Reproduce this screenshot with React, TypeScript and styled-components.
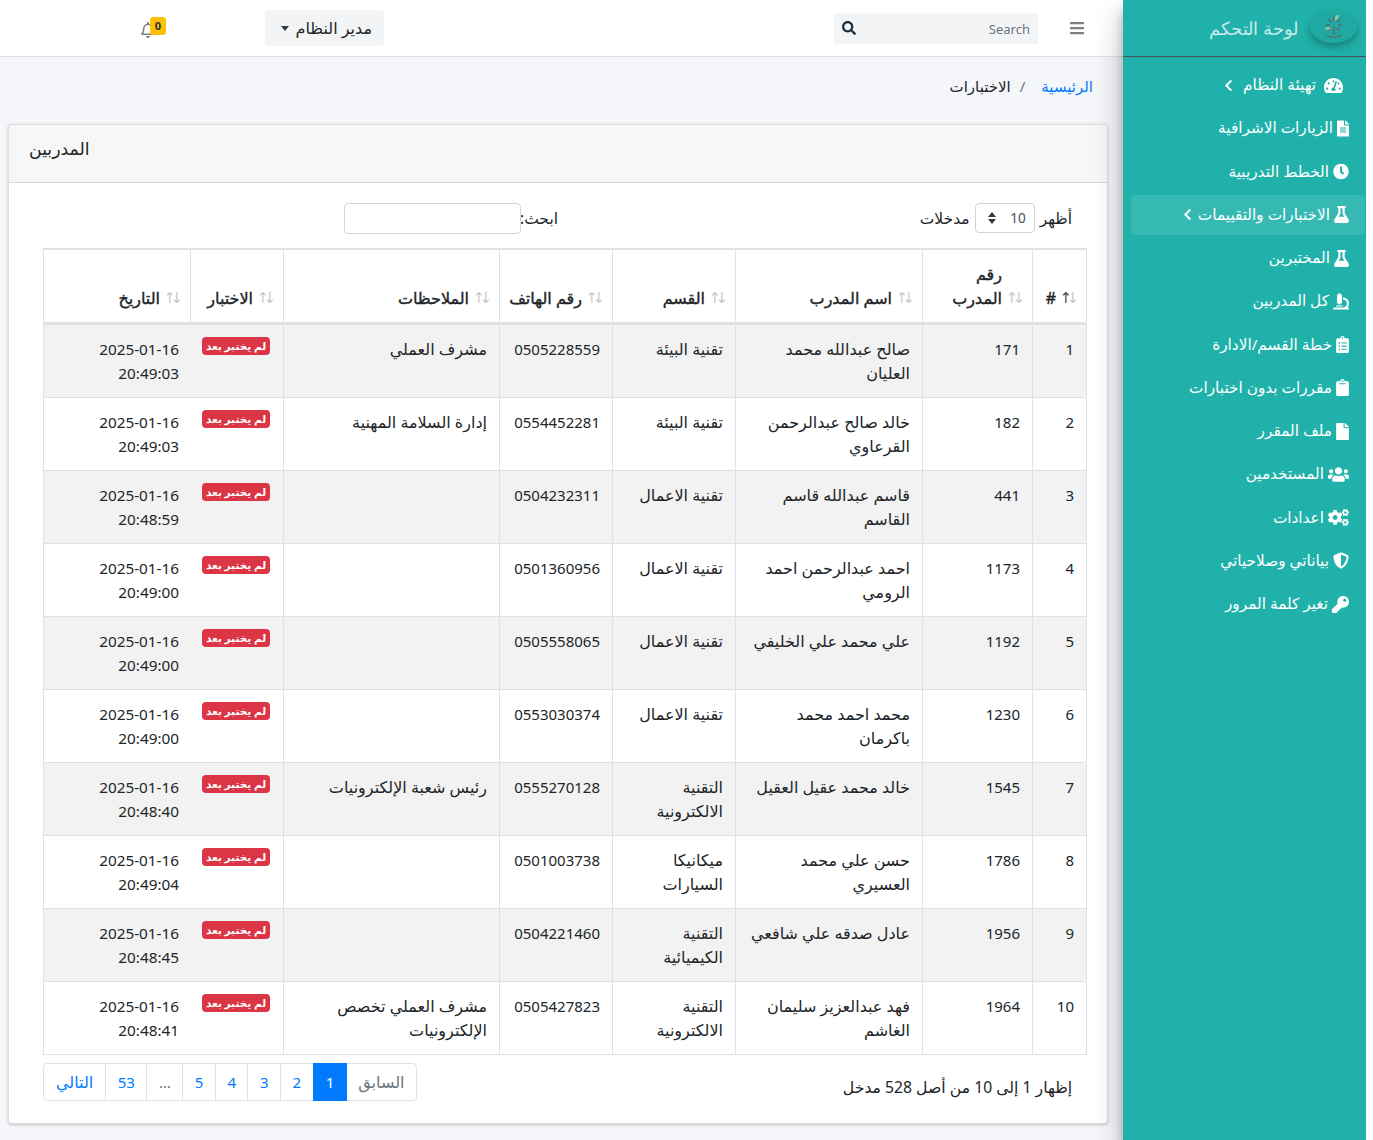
import React from "react";
import styled, { createGlobalStyle } from "styled-components";
import {
    FaBars,
    FaChevronLeft,
    FaClipboard,
    FaClipboardList,
    FaClock,
    FaCogs,
    FaFile,
    FaFileAlt,
    FaFlask,
    FaKey,
    FaMicroscope,
    FaRegBell,
    FaSearch,
    FaShieldAlt,
    FaTachometerAlt,
    FaUsers,
} from "react-icons/fa";

const GlobalStyle = createGlobalStyle`
    html, body {
        margin: 0;
        padding: 0;
        background: #fff;
    }
    body {
        font-family: "Noto Sans", "DejaVu Sans", sans-serif;
        font-size: 15px;
        line-height: 24px;
        color: #212529;
    }
    * {
        box-sizing: border-box;
    }
`;

const menu = [
    { icon: <FaTachometerAlt />, iconWidth: 19, label: "تهيئة النظام", arrow: true, inset: true },
    { icon: <FaFileAlt />, iconWidth: 12, label: "الزيارات الاشرافية" },
    { icon: <FaClock />, iconWidth: 16, label: "الخطط التدريبية" },
    { icon: <FaFlask />, iconWidth: 15, label: "الاختبارات والتقييمات", arrow: true, active: true },
    { icon: <FaFlask />, iconWidth: 15, label: "المختبرين" },
    { icon: <FaMicroscope />, iconWidth: 16, label: "كل المدربين" },
    { icon: <FaClipboardList />, iconWidth: 13, label: "خطة القسم/الادارة" },
    { icon: <FaClipboard />, iconWidth: 13, label: "مقررات بدون اختبارات" },
    { icon: <FaFile />, iconWidth: 13, label: "ملف المقرر" },
    { icon: <FaUsers />, iconWidth: 21, label: "المستخدمين" },
    { icon: <FaCogs />, iconWidth: 21, label: "اعدادات" },
    { icon: <FaShieldAlt />, iconWidth: 16, label: "بياناتي وصلاحياتي" },
    { icon: <FaKey />, iconWidth: 17, label: "تغير كلمة المرور" },
];

const columns = [
    { title: "#", width: 54, first: true },
    { title: "رقم المدرب", width: 110 },
    { title: "اسم المدرب", width: 187 },
    { title: "القسم", width: 123 },
    { title: "رقم الهاتف", width: 113 },
    { title: "الملاحظات", width: 216 },
    { title: "الاختبار", width: 93 },
    { title: "التاريخ", width: 147 },
];

const rows = [
    ["1", "171", "صالح عبدالله محمد العليان", "تقنية البيئة", "0505228559", "مشرف العملي", "2025-01-16 20:49:03"],
    ["2", "182", "خالد صالح عبدالرحمن القرعاوي", "تقنية البيئة", "0554452281", "إدارة السلامة المهنية", "2025-01-16 20:49:03"],
    ["3", "441", "قاسم عبدالله قاسم القاسم", "تقنية الاعمال", "0504232311", "", "2025-01-16 20:48:59"],
    ["4", "1173", "احمد عبدالرحمن احمد الرومي", "تقنية الاعمال", "0501360956", "", "2025-01-16 20:49:00"],
    ["5", "1192", "علي محمد علي الخليفي", "تقنية الاعمال", "0505558065", "", "2025-01-16 20:49:00"],
    ["6", "1230", "محمد احمد محمد باكرمان", "تقنية الاعمال", "0553030374", "", "2025-01-16 20:49:00"],
    ["7", "1545", "خالد محمد عقيل العقيل", "التقنية الالكترونية", "0555270128", "رئيس شعبة الإلكترونيات", "2025-01-16 20:48:40"],
    ["8", "1786", "حسن علي محمد العسيري", "ميكانيكا السيارات", "0501003738", "", "2025-01-16 20:49:04"],
    ["9", "1956", "عادل صدقه علي شافعي", "التقنية الكيميائية", "0504221460", "", "2025-01-16 20:48:45"],
    ["10", "1964", "فهد عبدالعزيز سليمان الغاشم", "التقنية الالكترونية", "0505427823", "مشرف العملي تخصص الإلكترونيات", "2025-01-16 20:48:41"],
];

const pages = ["1", "2", "3", "4", "5", "…", "53"];

function Logo() {
    const rays = [0, 45, 90, 135, 180, 225, 270, 315];
    return (
        <svg width="20" height="26" viewBox="0 0 20 26">
            {rays.map((r) => (
                <rect
                    key={r}
                    x="9.2"
                    y="3"
                    width="1.6"
                    height="4"
                    fill="#55706c"
                    transform={`rotate(${r} 10 11)`}
                />
            ))}
            <path d="M11 7c2-1 4-3 4-6-3 0-5 2-4 6z" fill="#8fd0a8" />
            <path d="M7 14c-2-1-5-1-6 1 2 1 5 1 6-1z" fill="#a9c9ab" />
            <path d="M10 12v9" stroke="#4f7a72" strokeWidth="1.6" />
            <path d="M3 21c3 3 11 3 14 0" stroke="#55706c" strokeWidth="1.2" fill="none" />
        </svg>
    );
}

export default function App() {
    return (
        <Page dir="rtl">
            <GlobalStyle />
            <Sidebar>
                <Brand>
                    <BrandLogo>
                        <Logo />
                    </BrandLogo>
                    <BrandText>لوحة التحكم</BrandText>
                </Brand>
                <Menu>
                    {menu.map((item) => (
                        <MenuItem
                            key={item.label}
                            $active={item.active}
                            $inset={item.inset}
                            $iconWidth={item.iconWidth}>
                            {item.icon}
                            <span>{item.label}</span>
                            {item.arrow && <MenuArrow />}
                        </MenuItem>
                    ))}
                </Menu>
            </Sidebar>

            <Main>
                <TopBar>
                    <BarsButton>
                        <FaBars />
                    </BarsButton>
                    <SearchBox>
                        <SearchInput placeholder="Search" />
                        <SearchButton>
                            <FaSearch />
                        </SearchButton>
                    </SearchBox>
                    <UserMenu>مدير النظام</UserMenu>
                    <Bell>
                        <FaRegBell />
                        <BellBadge>0</BellBadge>
                    </Bell>
                </TopBar>

                <Content>
                    <Breadcrumb>
                        <a href="#">الرئيسية</a>
                        <Slash>/</Slash>
                        <span>الاختبارات</span>
                    </Breadcrumb>

                    <Card>
                        <CardHeader>
                            <CardTitle>المدربين</CardTitle>
                        </CardHeader>
                        <CardBody>
                            <Controls>
                                <LengthBlock>
                                    <LabelText>أظهر</LabelText>
                                    <LengthSelect>
                                        <SelectArrows viewBox="0 0 8 12">
                                            <path d="M4 0l4 5H0zM4 12L0 7h8z" fill="#343a40" />
                                        </SelectArrows>
                                        10
                                    </LengthSelect>
                                    <LabelText>مدخلات</LabelText>
                                </LengthBlock>
                                <FilterBlock>
                                    <LabelText>ابحث:</LabelText>
                                    <FilterInput />
                                </FilterBlock>
                            </Controls>

                            <Table>
                                <colgroup>
                                    {columns.map((c) => (
                                        <Col key={c.title} $width={c.width} />
                                    ))}
                                </colgroup>
                                <thead>
                                    <tr>
                                        {columns.map((c) => (
                                            <Th key={c.title} $first={c.first}>
                                                {c.title}
                                            </Th>
                                        ))}
                                    </tr>
                                </thead>
                                <tbody>
                                    {rows.map((r) => (
                                        <Row key={r[0]}>
                                            <NumCell>{r[0]}</NumCell>
                                            <NumCell>{r[1]}</NumCell>
                                            <Td>{r[2]}</Td>
                                            <Td>{r[3]}</Td>
                                            <NumCell>{r[4]}</NumCell>
                                            <Td>{r[5]}</Td>
                                            <BadgeCell>
                                                <Badge>لم يختبر بعد</Badge>
                                            </BadgeCell>
                                            <DateCell>{r[6]}</DateCell>
                                        </Row>
                                    ))}
                                </tbody>
                            </Table>

                            <Footer>
                                <Info>إظهار 1 إلى 10 من أصل 528 مدخل</Info>
                                <Pagination>
                                    <PageLink $muted $pad={11}>السابق</PageLink>
                                    {pages.map((p, i) => (
                                        <PageDigit key={p} $active={i === 0} $muted={p === "…"} $pad={i === 0 ? 12 : 11.5}>
                                            {p}
                                        </PageDigit>
                                    ))}
                                    <PageLink $pad={12}>التالي</PageLink>
                                </Pagination>
                            </Footer>
                        </CardBody>
                    </Card>
                </Content>
            </Main>
        </Page>
    );
}

const Page = styled.div`
    display: flex;
    width: 1366px;
    height: 1140px;
    overflow: hidden;
    background: #f4f6f9;
`;

const Sidebar = styled.aside`
    flex: 0 0 243px;
    position: relative;
    z-index: 2;
    background: #20b2aa;
    color: #fff;
    box-shadow: 0 14px 28px rgba(0, 0, 0, 0.25), 0 10px 10px rgba(0, 0, 0, 0.22);
`;

const Brand = styled.div`
    height: 57px;
    display: flex;
    align-items: center;
    gap: 12px;
    padding-right: 9px;
    border-bottom: 1px solid #4b545c;
`;

const BrandLogo = styled.div`
    width: 47px;
    height: 32px;
    margin-top: -3px;
    border-radius: 50%;
    background: #1fa9a2;
    box-shadow: 0 4px 9px rgba(0, 0, 0, 0.3);
    display: flex;
    align-items: center;
    justify-content: center;
`;

const BrandText = styled.span`
    font-size: 17.6px;
    font-weight: 300;
    color: rgba(255, 255, 255, 0.75);
`;

const Menu = styled.nav`
    display: flex;
    flex-direction: column;
    gap: 3.25px;
    padding: 8px 1px 0 8px;
`;

const MenuItem = styled.a<{ $active?: boolean; $inset?: boolean; $iconWidth: number }>`
    height: 40px;
    display: flex;
    align-items: center;
    gap: ${(p) => (p.$inset ? "8px" : "4px")};
    padding: 0 ${(p) => (p.$inset ? "22px" : "16px")} 2px 0;
    border-radius: 4px;
    font-size: 15.3px;
    background: ${(p) => (p.$active ? "rgba(255, 255, 255, 0.1)" : "transparent")};
    svg {
        width: ${(p) => p.$iconWidth}px;
        height: 17px;
        flex: none;
        margin-top: 2px;
    }
`;

const MenuArrow = styled(FaChevronLeft)`
    && {
        width: 9px;
        height: 13px;
        margin-right: 2px;
    }
`;

const Main = styled.div`
    flex: 1;
    min-width: 0;
`;

const TopBar = styled.header`
    height: 57px;
    display: flex;
    align-items: center;
    padding-right: 38px;
    background: #fff;
    border-bottom: 1px solid #dee2e6;
`;

const BarsButton = styled.div`
    display: flex;
    color: rgba(0, 0, 0, 0.5);
    font-size: 16px;
`;

const SearchBox = styled.div`
    width: 204px;
    height: 31px;
    margin-right: 31px;
    display: flex;
    align-items: center;
    background: #f2f4f6;
    border-radius: 4px 0 0 4px;
`;

const SearchInput = styled.input`
    flex: 1;
    min-width: 0;
    height: 100%;
    padding: 2px 8px 0;
    border: 0;
    outline: 0;
    background: transparent;
    font-family: inherit;
    font-size: 13px;
    &::placeholder {
        color: #6c757d;
    }
`;

const SearchButton = styled.div`
    width: 30px;
    display: flex;
    justify-content: center;
    font-size: 14px;
    color: #1f2d3d;
`;

const UserMenu = styled.div`
    width: 119px;
    height: 36px;
    margin-right: 450px;
    padding-right: 12px;
    display: flex;
    align-items: center;
    gap: 7px;
    background: #f2f4f6;
    border-radius: 4px;
    font-size: 16px;
    &::after {
        content: "";
        border-top: 5px solid #343a40;
        border-left: 4.5px solid transparent;
        border-right: 4.5px solid transparent;
    }
`;

const Bell = styled.div`
    position: relative;
    margin-right: 99px;
    width: 26px;
    height: 24px;
    display: flex;
    align-items: center;
    justify-content: flex-end;
    font-size: 16px;
    color: rgba(0, 0, 0, 0.5);
    svg {
        margin-top: 4px;
    }
`;

const BellBadge = styled.span`
    position: absolute;
    top: 1px;
    right: 0;
    width: 16px;
    height: 18px;
    border-radius: 3px;
    background: #ffc107;
    color: #1f2d3d;
    font-size: 11px;
    font-weight: 700;
    line-height: 18px;
    text-align: center;
`;

const Content = styled.main`
    padding: 0 15px;
`;

const Breadcrumb = styled.div`
    height: 67px;
    display: flex;
    align-items: flex-start;
    gap: 8px;
    padding: 17px 15px 0 0;
    margin-left: -7px;
    font-size: 15px;
    a {
        color: #007bff;
        text-decoration: none;
    }
`;

const Slash = styled.span`
    color: #6c757d;
    margin: 0 8px 0 1px;
`;

const Card = styled.section`
    width: 1100px;
    height: 1000px;
    margin-left: -7px;
    background: #fff;
    border: 1px solid rgba(0, 0, 0, 0.125);
    border-radius: 4px;
    box-shadow: 0 0 1px rgba(0, 0, 0, 0.125), 0 1px 3px rgba(0, 0, 0, 0.2);
    overflow: hidden;
`;

const CardHeader = styled.div`
    height: 58px;
    display: flex;
    align-items: center;
    justify-content: flex-end;
    padding: 0 20px;
    background: #f7f7f7;
    border-bottom: 1px solid rgba(0, 0, 0, 0.125);
`;

const CardTitle = styled.h3`
    margin: 0 0 10px;
    font-size: 17.3px;
    font-weight: 400;
`;

const CardBody = styled.div`
    padding: 20px 20px 0 34px;
`;

const Controls = styled.div`
    height: 45px;
    display: flex;
    align-items: flex-start;
    padding-right: 15px;
`;

const LengthBlock = styled.label`
    width: 514px;
    height: 31px;
    display: flex;
    align-items: center;
    gap: 5px;
`;

const LabelText = styled.span`
    font-size: 15.5px;
    margin-bottom: 2px;
`;

const LengthSelect = styled.div`
    width: 60px;
    height: 30px;
    margin-bottom: 1px;
    display: flex;
    align-items: center;
    justify-content: space-between;
    padding: 0 8px 0 12px;
    border: 1px solid #ced4da;
    border-radius: 4px;
    font-size: 13.5px;
    color: #495057;
`;

const SelectArrows = styled.svg`
    width: 8px;
    height: 12px;
    order: 2;
`;

const FilterBlock = styled.label`
    height: 31px;
    display: flex;
    align-items: center;
`;

const FilterInput = styled.input`
    width: 177px;
    height: 31px;
    margin-right: -1px;
    border: 1px solid #ced4da;
    border-radius: 4px;
    background: #fff;
`;

const Table = styled.table`
    width: 1043px;
    table-layout: fixed;
    border-collapse: separate;
    border-spacing: 0;
    border-top: 2px solid #dee2e6;
    border-left: 1px solid #dee2e6;
`;

const Col = styled.col<{ $width: number }>`
    width: ${(p) => p.$width}px;
`;

const Th = styled.th<{ $first?: boolean }>`
    position: relative;
    padding: 12px 30px 12px 8px;
    vertical-align: bottom;
    text-align: right;
    font-weight: 400;
    font-size: 16px;
    -webkit-text-stroke: 0.4px #212529;
    border-right: 1px solid #dee2e6;
    border-bottom: 3px solid #dee2e6;
    &::before,
    &::after {
        position: absolute;
        bottom: 13px;
        font-size: 15px;
        -webkit-text-stroke: 0;
        color: #212529;
        opacity: ${(p) => (p.$first ? 0.85 : 0.25)};
    }
    &::before {
        content: "↑";
        right: 14px;
    }
    &::after {
        content: "↓";
        right: 7px;
        opacity: 0.25;
    }
`;

const Row = styled.tr`
    &:nth-child(odd) {
        background: #f2f2f2;
    }
`;

const Td = styled.td`
    padding: 12px;
    vertical-align: top;
    font-size: 16px;
    border-right: 1px solid #dee2e6;
    border-bottom: 1px solid #dee2e6;
`;

const NumCell = styled(Td)`
    font-size: 15px;
`;

const BadgeCell = styled(Td)`
    padding: 12px 13px 0 0;
`;

const DateCell = styled(Td)`
    border-right: 0;
    font-size: 15.3px;
    text-align: right;
`;

const Badge = styled.span`
    display: block;
    width: 68px;
    height: 18px;
    border-radius: 4px;
    background: #dc3545;
    color: #fff;
    font-size: 10.5px;
    font-weight: 700;
    line-height: 18px;
    text-align: center;
    white-space: nowrap;
`;

const Footer = styled.div`
    display: flex;
    align-items: flex-start;
    justify-content: space-between;
    padding: 8px 15px 0 0;
    width: 1043px;
`;

const Info = styled.div`
    padding-top: 12px;
    font-size: 15.7px;
`;

const Pagination = styled.div`
    display: flex;
    height: 38px;
    margin-left: -1px;
`;

const PageLink = styled.a<{ $active?: boolean; $muted?: boolean; $pad: number }>`
    padding: 0 ${(p) => p.$pad}px;
    display: flex;
    align-items: center;
    justify-content: center;
    font-size: 16px;
    margin-right: -1px;
    border: 1px solid ${(p) => (p.$active ? "#007bff" : "#dee2e6")};
    background: ${(p) => (p.$active ? "#007bff" : "#fff")};
    color: ${(p) => (p.$active ? "#fff" : p.$muted ? "#6c757d" : "#007bff")};
    position: relative;
    z-index: ${(p) => (p.$active ? 1 : 0)};
    &:first-child {
        margin-right: 0;
        border-radius: 0 4px 4px 0;
    }
    &:last-child {
        border-radius: 4px 0 0 4px;
    }
`;

const PageDigit = styled(PageLink)`
    font-size: 15px;
`;
